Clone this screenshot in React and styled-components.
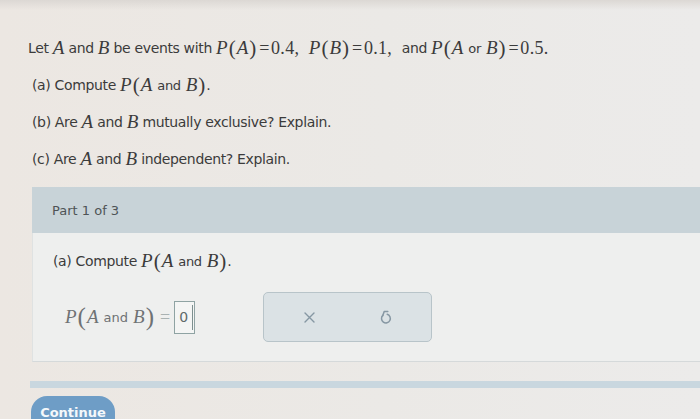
import React from 'react'
import styled, { createGlobalStyle } from 'styled-components'

const GlobalStyle = createGlobalStyle`
    html, body {
        margin: 0;
        padding: 0;
        height: 100%;
    }
    body {
        background: linear-gradient(90deg, #ece7e2 0%, #ebe9e6 55%, #ecebea 100%);
        font-family: "DejaVu Sans", Verdana, sans-serif;
        color: #3b3b3b;
        overflow: hidden;
    }
`

const Page = styled.div`
    width: 700px;
    height: 419px;
    overflow: hidden;
    display: flex;
    flex-direction: column;
    & > * {
        flex-shrink: 0;
    }
`

const TopShade = styled.div`
    height: 10px;
    background: linear-gradient(180deg, #dcd8d4, rgba(235,231,227,0));
`

const Question = styled.div`
    padding: 28px 0 0 28px;
    display: flex;
    flex-direction: column;
    gap: 17px;
`

const Line = styled.div`
    font-size: 14px;
    letter-spacing: -0.35px;
    height: 20px;
    display: flex;
    align-items: center;
    white-space: pre;
    padding-left: ${p => p.indent || 0}px;
`

const MathVar = styled.span`
    font-family: "Liberation Serif", "Times New Roman", serif;
    font-style: italic;
    font-size: 19px;
    letter-spacing: 0;
`

const MathNum = styled.span`
    font-family: "Liberation Serif", "Times New Roman", serif;
    font-size: 18px;
    letter-spacing: 0.3px;
`

const Equals = styled.span`
    font-family: "Liberation Serif", "Times New Roman", serif;
    font-size: 18px;
    margin: 0 2px;
`

const Paren = styled.span`
    font-family: "Liberation Serif", "Times New Roman", serif;
    font-size: ${p => p.big ? 25 : 21}px;
    font-weight: 300;
    letter-spacing: 0;
    margin: 0 1px;
`

const Word = styled.span`
    font-size: 13px;
    margin: 0 5px;
`

const Panel = styled.div`
    margin: 18px 0 0 32px;
    display: flex;
    flex-direction: column;
    & > * {
        flex-shrink: 0;
    }
`

const PanelHeader = styled.div`
    height: 46px;
    background: #c8d3d8;
    display: flex;
    align-items: center;
    padding-left: 20px;
    font-size: 13px;
    color: #4e5356;
`

const PanelBody = styled.div`
    height: 129px;
    box-sizing: border-box;
    background: #eeefee;
    border-left: 1px solid #dfe2e2;
    border-bottom: 1px solid #d5d9da;
    padding: 18px 0 0 20px;
    display: flex;
    flex-direction: column;
    gap: 21px;
`

const AnswerRow = styled.div`
    display: flex;
    align-items: center;
    gap: 68px;
    padding-left: 12px;
`

const Expr = styled.div`
    display: flex;
    align-items: center;
    color: #6f7274;
    white-space: pre;
`

const Eq = styled.span`
    font-family: "Liberation Serif", serif;
    font-size: 18px;
    color: #a9b2b2;
    margin: 0 4px 0 5px;
`

const InputBox = styled.div`
    width: 17px;
    height: 31px;
    border: 1.5px solid #8fa3a3;
    background: #f4f5f4;
    display: flex;
    align-items: center;
    justify-content: center;
    padding-right: 2px;
    font-family: "DejaVu Sans", sans-serif;
    font-size: 14px;
    color: #5f6a6a;
    position: relative;
    &::after {
        content: '';
        position: absolute;
        right: 1px;
        top: 3px;
        bottom: 3px;
        width: 1.5px;
        background: #7d8f8f;
    }
`

const ToolBox = styled.div`
    width: 169px;
    height: 50px;
    box-sizing: border-box;
    background: #dbe2e5;
    border: 1.5px solid #b8c4c9;
    border-radius: 5px;
    display: flex;
    align-items: center;
    gap: 58px;
    padding-left: 36px;
    color: #8697a3;
`

const IconBtn = styled.span`
    display: flex;
    align-items: center;
    justify-content: center;
    width: 18px;
    height: 20px;
`

const FooterLine = styled.div`
    margin: 19px 0 0 -2px;
    height: 7px;
    background: #c9d7df;
`

const ContinueBtn = styled.button`
    margin: 8px 0 0 31px;
    width: 84px;
    height: 40px;
    border: none;
    border-radius: 16px;
    background: #6e9dc6;
    color: #f4f8fb;
    font-family: "DejaVu Sans", Verdana, sans-serif;
    font-weight: bold;
    font-size: 13px;
    align-self: flex-start;
    display: flex;
    justify-content: center;
    align-items: flex-start;
    padding: 9px 0 0;
`

function PAndB({ big }) {
    return (
        <>
            <MathVar>P</MathVar>
            <Paren big={big}>(</Paren>
            <MathVar>A</MathVar>
            <Word>and</Word>
            <MathVar>B</MathVar>
            <Paren big={big}>)</Paren>
        </>
    )
}

function App() {
    return (
        <Page>
            <GlobalStyle />
            <TopShade />
            <Question>
                <Line>
                    Let <MathVar>A</MathVar> and <MathVar>B</MathVar> be events with <MathVar>P</MathVar><Paren>(</Paren><MathVar>A</MathVar><Paren>)</Paren><Equals>=</Equals><MathNum>0.4,  </MathNum>
                    <MathVar>P</MathVar><Paren>(</Paren><MathVar>B</MathVar><Paren>)</Paren><Equals>=</Equals><MathNum>0.1,  </MathNum>
                    and <MathVar>P</MathVar><Paren>(</Paren><MathVar>A</MathVar><Word>or</Word><MathVar>B</MathVar><Paren>)</Paren><Equals>=</Equals><MathNum>0.5.</MathNum>
                </Line>
                <Line indent={4}>
                    (a) Compute <PAndB />.
                </Line>
                <Line indent={4}>
                    (b) Are <MathVar>A</MathVar> and <MathVar>B</MathVar> mutually exclusive? Explain.
                </Line>
                <Line indent={4}>
                    (c) Are <MathVar>A</MathVar> and <MathVar>B</MathVar> independent? Explain.
                </Line>
            </Question>
            <Panel>
                <PanelHeader>Part 1 of 3</PanelHeader>
                <PanelBody>
                    <Line>
                        (a) Compute <PAndB />.
                    </Line>
                    <AnswerRow>
                        <Expr>
                            <PAndB big />
                            <Eq>=</Eq>
                            <InputBox>0</InputBox>
                        </Expr>
                        <ToolBox>
                            <IconBtn>
                                <svg width="13" height="13" viewBox="0 0 13 13" fill="none" stroke="currentColor" strokeWidth="1.4" strokeLinecap="round">
                                    <path d="M2 2 L11 11 M11 2 L2 11" />
                                </svg>
                            </IconBtn>
                            <IconBtn>
                                <svg width="13" height="16" viewBox="0 0 13 16" fill="none" stroke="currentColor" strokeWidth="1.5" strokeLinecap="round" strokeLinejoin="round">
                                    <path d="M3.8 6.4 A4.4 4.4 0 1 0 8.2 5.3" />
                                    <path d="M8.8 2.4 H5.2 L3.8 6.4" />
                                </svg>
                            </IconBtn>
                        </ToolBox>
                    </AnswerRow>
                </PanelBody>
                <FooterLine />
            </Panel>
            <ContinueBtn>Continue</ContinueBtn>
        </Page>
    )
}

export default App
